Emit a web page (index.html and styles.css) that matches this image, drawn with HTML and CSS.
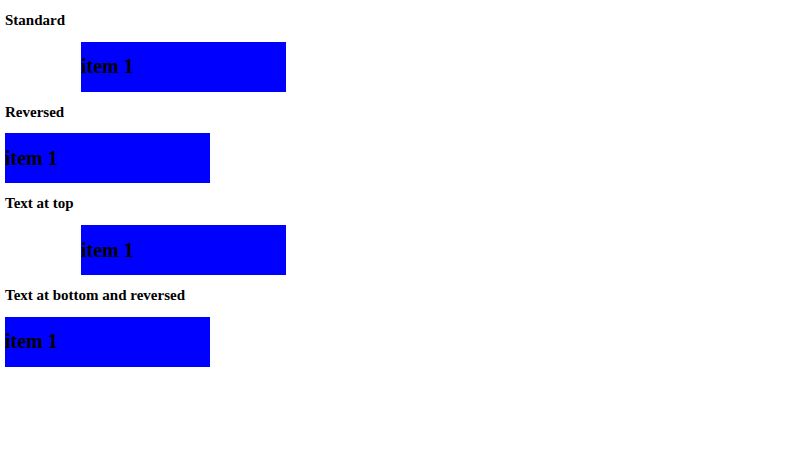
FILE: index.html
```html
<!DOCTYPE html>
<html>
<head>
<meta charset="utf-8">
<link rel="stylesheet" href="styles.css">
</head>
<body>
<section class="demo">
  <h4 class="title">Standard</h4>
  <div class="row">
    <div class="spacer"></div>
    <div class="item">item 1</div>
  </div>
</section>
<section class="demo">
  <h4 class="title">Reversed</h4>
  <div class="row reversed">
    <div class="spacer"></div>
    <div class="item">item 1</div>
  </div>
</section>
<section class="demo">
  <h4 class="title">Text at top</h4>
  <div class="row">
    <div class="spacer"></div>
    <div class="item">item 1</div>
  </div>
</section>
<section class="demo">
  <h4 class="title">Text at bottom and reversed</h4>
  <div class="row reversed">
    <div class="spacer"></div>
    <div class="item">item 1</div>
  </div>
</section>
</body>
</html>
```
FILE: styles.css
```css
html, body {
  margin: 0;
  padding: 0;
  background: #fff;
}
body {
  padding: 0 5px;
  font-family: "Liberation Serif", "Times New Roman", serif;
  color: #000;
}
.demo {
  display: flex;
  flex-direction: column;
  gap: 12px;
  padding-top: 12px;
}
.title {
  margin: 0;
  font-size: 15px;
  font-weight: bold;
  line-height: 17.67px;
}
.row {
  display: flex;
  justify-content: flex-start;
}
.row.reversed {
  flex-direction: row-reverse;
  justify-content: flex-end;
}
.spacer {
  width: 76px;
  flex: none;
}
.reversed .spacer {
  width: 0;
}
.item {
  width: 205px;
  height: 50px;
  background: #0000ff;
  display: flex;
  align-items: center;
  font-size: 20px;
  font-weight: bold;
  line-height: 23px;
}
```
